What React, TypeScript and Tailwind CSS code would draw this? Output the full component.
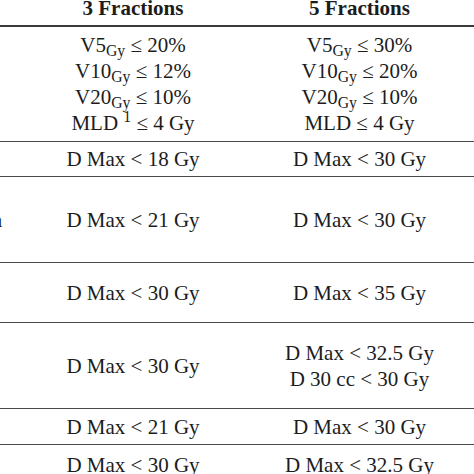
const serif = { fontFamily: '"Liberation Serif", "Times New Roman", serif' };

type Row = {
  label?: string;
  h: string;
  a: React.ReactNode;
  b: React.ReactNode;
};

const Gy = () => <sub>Gy</sub>;

const rows: Row[] = [
  {
    label: "Lung",
    h: "h-[115px]",
    a: (
      <>
        <div>V5<Gy /> ≤ 20%</div>
        <div>V10<Gy /> ≤ 12%</div>
        <div>V20<Gy /> ≤ 10%</div>
        <div>MLD <sup>1</sup> ≤ 4 Gy</div>
      </>
    ),
    b: (
      <>
        <div>V5<Gy /> ≤ 30%</div>
        <div>V10<Gy /> ≤ 20%</div>
        <div>V20<Gy /> ≤ 10%</div>
        <div>MLD ≤ 4 Gy</div>
      </>
    ),
  },
  { label: "Spinal Cord", h: "h-[35px]", a: "D Max < 18 Gy", b: "D Max < 30 Gy" },
  { label: "Trachea", h: "h-[86px]", a: "D Max < 21 Gy", b: "D Max < 30 Gy" },
  { label: "Brachial Plexus", h: "h-[60px]", a: "D Max < 30 Gy", b: "D Max < 35 Gy" },
  {
    label: "Heart",
    h: "h-[86px]",
    a: "D Max < 30 Gy",
    b: (
      <>
        <div>D Max &lt; 32.5 Gy</div>
        <div>D 30 cc &lt; 30 Gy</div>
      </>
    ),
  },
  { label: "Esophagus", h: "h-[36px]", a: "D Max < 21 Gy", b: "D Max < 30 Gy" },
  { label: "Great Vessels", h: "h-[40px]", a: "D Max < 30 Gy", b: "D Max < 32.5 Gy" },
];

export default function App() {
  return (
    <div className="w-[474px] h-[474px] overflow-hidden bg-white text-[#1c1c1c]" style={serif}>
      <div className="-ml-[79px] w-[558px] text-[21px]">
        {/* header */}
        <div className="flex h-[27px] items-end border-b-2 border-[#3a3a3a] pb-[5px] font-bold leading-[23px]">
          <div className="w-[100px]" />
          <div className="w-[224px] text-center">3 Fractions</div>
          <div className="w-[234px] pr-[5px] text-center">5 Fractions</div>
        </div>

        {rows.map((r, i) => (
          <div
            key={i}
            className={`flex items-center leading-[26px] ${r.h} ${
              i < rows.length - 1 ? "border-b border-[#4a4a4a]" : ""
            }`}
          >
            <div className="w-[100px] pl-[8px] font-bold whitespace-nowrap">
              {r.label === "Trachea" ? r.label : ""}
            </div>
            <div className="w-[224px] text-center whitespace-nowrap">{r.a}</div>
            <div className="w-[234px] pr-[5px] text-center whitespace-nowrap">{r.b}</div>
          </div>
        ))}
      </div>
    </div>
  );
}
